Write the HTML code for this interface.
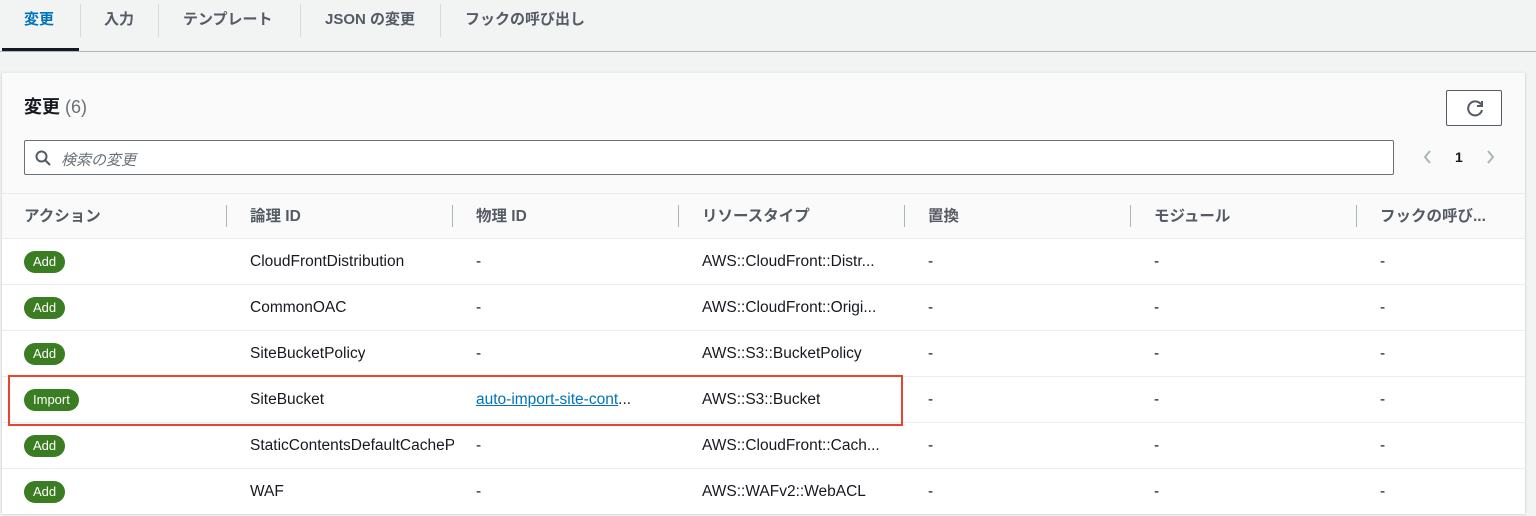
<!DOCTYPE html>
<html><head><meta charset="utf-8"><style>
*{box-sizing:border-box;margin:0;padding:0}
body{width:1536px;height:516px;background:#f2f3f3;font-family:"Liberation Sans","Noto Sans CJK JP",sans-serif;color:#16191f;font-size:15.5px;position:relative;overflow:hidden}
.tabs{position:absolute;left:0;top:0;width:1536px;height:52px;border-bottom:1px solid #aab7b8}
.tab{position:absolute;top:0;height:52px;line-height:40px;font-size:15px;font-weight:bold;color:#545b64}
.sep{position:absolute;top:4px;width:1px;height:33px;background:#d5dbdb}
.panel{position:absolute;left:2px;top:72px;width:1523px;height:441px;background:#fafafa;box-shadow:0 1px 2px rgba(0,0,0,.25);border-top:1px solid #eaeded}
h2{position:absolute;left:22px;top:20px;font-size:18px;font-weight:bold}
h2 span{font-weight:normal;color:#687078}
.refresh{position:absolute;left:1444px;top:17px;width:56px;height:36px;border:1px solid #545b64;border-radius:2px;background:#fff}
.search{position:absolute;left:22px;top:67px;width:1370px;height:35px;border:1px solid #687078;border-radius:2px;background:#fff}
.search i{position:absolute;left:36px;top:8px;color:#687078;font-size:15px}
.row{position:absolute;left:0;width:1523px;height:46px;border-top:1px solid #eaeded;background:#fff}
.hdr{background:#fafafa;font-weight:bold;color:#545b64}
.c{position:absolute;top:0;line-height:45px;white-space:nowrap;overflow:hidden}
.hs{position:absolute;top:11px;width:1px;height:22px;background:#aab7b8}
.b{position:absolute;left:22px;top:12px;height:22px;line-height:22px;border-radius:11px;background:#3b7d23;color:#fff;font-size:13px;padding:0 9px}
a{color:#0073bb;text-decoration:underline}
</style></head><body>
<div class="tabs">
<div class="tab" style="left:24px;color:#0073bb">変更</div>
<div style="position:absolute;left:2px;top:48px;width:77px;height:3px;background:#16191f"></div>
<div class="sep" style="left:80px"></div>
<div class="tab" style="left:104px">入力</div>
<div class="sep" style="left:158px"></div>
<div class="tab" style="left:183px">テンプレート</div>
<div class="sep" style="left:300px"></div>
<div class="tab" style="left:325px">JSON の変更</div>
<div class="sep" style="left:440px"></div>
<div class="tab" style="left:465px">フックの呼び出し</div>
</div>
<div class="panel">
<h2>変更 <span>(6)</span></h2>
<div class="refresh"><svg width="56" height="36" viewBox="0 0 56 36"><path d="M34 13.5 A7 7 0 1 0 35 19" fill="none" stroke="#545b64" stroke-width="2"/><path d="M35 10 V15 H30" fill="none" stroke="#545b64" stroke-width="2"/></svg></div>
<div class="search"><svg style="position:absolute;left:10px;top:9px" width="16" height="16" viewBox="0 0 16 16"><circle cx="6.5" cy="6.5" r="5" fill="none" stroke="#545b64" stroke-width="2"/><path d="M10 10l5 5" stroke="#545b64" stroke-width="2"/></svg><i>検索の変更</i></div>
<svg style="position:absolute;left:1420px;top:76px" width="90" height="16"><path d="M8 2L3 8l5 6" fill="none" stroke="#aab7b8" stroke-width="2"/><path d="M66 2l5 6-5 6" fill="none" stroke="#aab7b8" stroke-width="2"/><text x="33" y="13" font-family="Liberation Sans" font-weight="bold" font-size="14" fill="#16191f">1</text></svg>
<div class="row hdr" style="top:120px">
<div class="c" style="left:22px">アクション</div><div class="hs" style="left:224px"></div>
<div class="c" style="left:248px">論理 ID</div><div class="hs" style="left:450px"></div>
<div class="c" style="left:474px">物理 ID</div><div class="hs" style="left:676px"></div>
<div class="c" style="left:700px">リソースタイプ</div><div class="hs" style="left:902px"></div>
<div class="c" style="left:926px">置換</div><div class="hs" style="left:1128px"></div>
<div class="c" style="left:1152px">モジュール</div><div class="hs" style="left:1354px"></div>
<div class="c" style="left:1378px">フックの呼び...</div>
</div>
<div class="row" style="top:165px"><span class="b">Add</span><div class="c" style="left:248px">CloudFrontDistribution</div><div class="c" style="left:474px">-</div><div class="c" style="left:700px">AWS::CloudFront::Distr...</div><div class="c" style="left:926px">-</div><div class="c" style="left:1152px">-</div><div class="c" style="left:1378px">-</div></div>
<div class="row" style="top:211px"><span class="b">Add</span><div class="c" style="left:248px">CommonOAC</div><div class="c" style="left:474px">-</div><div class="c" style="left:700px">AWS::CloudFront::Origi...</div><div class="c" style="left:926px">-</div><div class="c" style="left:1152px">-</div><div class="c" style="left:1378px">-</div></div>
<div class="row" style="top:257px"><span class="b">Add</span><div class="c" style="left:248px">SiteBucketPolicy</div><div class="c" style="left:474px">-</div><div class="c" style="left:700px">AWS::S3::BucketPolicy</div><div class="c" style="left:926px">-</div><div class="c" style="left:1152px">-</div><div class="c" style="left:1378px">-</div></div>
<div class="row" style="top:303px"><span class="b">Import</span><div class="c" style="left:248px">SiteBucket</div><div class="c" style="left:474px"><a>auto-import-site-cont</a>...</div><div class="c" style="left:700px">AWS::S3::Bucket</div><div class="c" style="left:926px">-</div><div class="c" style="left:1152px">-</div><div class="c" style="left:1378px">-</div></div>
<div class="row" style="top:349px"><span class="b">Add</span><div class="c" style="left:248px;width:204px">StaticContentsDefaultCachePolicy</div><div class="c" style="left:474px">-</div><div class="c" style="left:700px">AWS::CloudFront::Cach...</div><div class="c" style="left:926px">-</div><div class="c" style="left:1152px">-</div><div class="c" style="left:1378px">-</div></div>
<div class="row" style="top:395px"><span class="b">Add</span><div class="c" style="left:248px">WAF</div><div class="c" style="left:474px">-</div><div class="c" style="left:700px">AWS::WAFv2::WebACL</div><div class="c" style="left:926px">-</div><div class="c" style="left:1152px">-</div><div class="c" style="left:1378px">-</div></div>
</div>
<div style="position:absolute;left:8px;top:375px;width:895px;height:51px;border:2px solid #e8452c"></div>
</body></html>
